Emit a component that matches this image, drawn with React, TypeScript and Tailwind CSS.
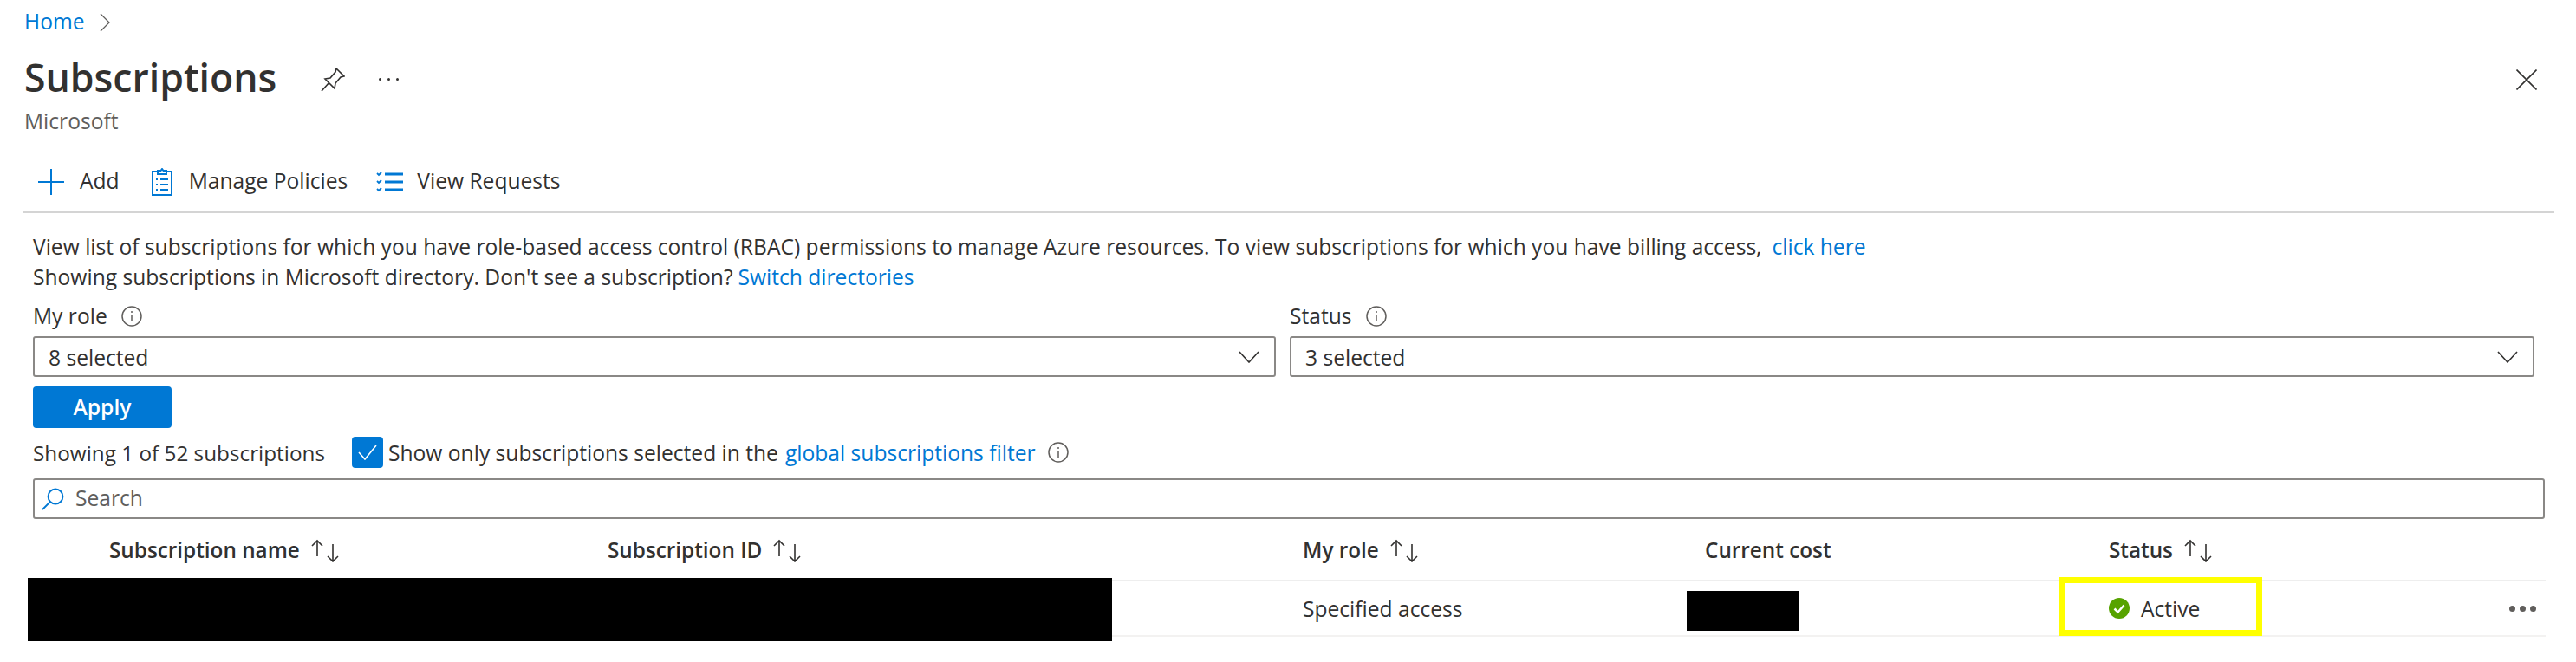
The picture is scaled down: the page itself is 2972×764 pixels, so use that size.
import React from 'react';

const font = "font-['Open_Sans','Noto_Sans',sans-serif]";

function InfoIcon() {
  return (
    <svg width="24" height="24" viewBox="0 0 24 24" fill="none" stroke="#605e5c">
      <circle cx="12" cy="12" r="11" strokeWidth="1.5" />
      <path d="M12 10.500v7.500M12 6v2" strokeWidth="1.5" />
    </svg>
  );
}

function Chevron() {
  return (
    <svg width="24" height="14" viewBox="0 0 24 14" fill="none" stroke="#323130" strokeWidth="1.6">
      <path d="M1 1l11 12L23 1" />
    </svg>
  );
}

function SortIcon() {
  return (
    <svg width="36" height="27" viewBox="0 0 36 27" fill="none" stroke="#323130" strokeWidth="1.6">
      <path d="M9 20V2M3 8l6-6 6 6" />
      <path d="M27 6v20M21 20l6 6 6-6" />
    </svg>
  );
}

function Select({ label, value }: { label: string; value: string }) {
  return (
    <div>
      <div className="flex h-[34px] items-center gap-[16px] pt-[2px]">
        <span>{label}</span>
        <InfoIcon />
      </div>
      <div className="mt-[7px] flex h-[47px] items-center justify-between rounded-[3px] border-2 border-[#8a8886] pl-[16px] pr-[17px]">
        <span className="pt-[3px]">{value}</span>
        <Chevron />
      </div>
    </div>
  );
}

function HeaderCell({ label, sort, className }: { label: string; sort?: boolean; className?: string }) {
  return (
    <div className={`flex items-center gap-[11px] pt-[3px] text-[24.3px] font-semibold ${className || ''}`}>
      <span>{label}</span>
      {sort && <SortIcon />}
    </div>
  );
}

export default function App() {
  return (
    <div className={`${font} relative h-[764px] w-[2972px] overflow-hidden bg-white text-[24.6px] text-[#323130]`}>
      <div className="flex h-[48px] items-center gap-[17px] pl-[28px] pt-[3px] text-[#0078d4]">
        <a>Home</a>
        <svg width="12" height="22" viewBox="0 0 12 22" fill="none" stroke="#605e5c" strokeWidth="1.3">
          <path d="M1 1l10 10L1 21" />
        </svg>
      </div>

      <div className="relative flex h-[72px] items-center pl-[28px] pt-[10px]">
        <h1 className="w-[342px] text-[44.6px] font-semibold leading-none">Subscriptions</h1>
        <svg className="mt-[5px]" width="28" height="28" viewBox="0 0 28 28" fill="none" stroke="#323130" strokeWidth="1.6">
          <path d="M1 27l9-10M18 1l9 9-4 1-6 7-1 6L5 13l6-1 6-7z" />
        </svg>
        <div className="ml-[39px] mt-[5px] flex gap-[7px]">
          <span className="size-[3px] rounded-full bg-[#323130]" />
          <span className="size-[3px] rounded-full bg-[#323130]" />
          <span className="size-[3px] rounded-full bg-[#323130]" />
        </div>
        <svg className="absolute left-[2903px] top-[32px]" width="24" height="24" viewBox="0 0 24 24" fill="none" stroke="#323130" strokeWidth="1.6">
          <path d="M0.500 0.500l23 23M23.500 0.500l-23 23" />
        </svg>
      </div>

      <div className="flex h-[40px] items-center pl-[28px] text-[#605e5c]">Microsoft</div>

      <div className="flex h-[84px] items-center pl-[44px] pt-[15px]">
        <svg width="30" height="30" viewBox="0 0 30 30" fill="none" stroke="#0078d4" strokeWidth="2">
          <path d="M15 0v30M0 15h30" />
        </svg>
        <span className="ml-[18px]">Add</span>
        <svg className="ml-[37px]" width="24" height="32" viewBox="0 0 24 32" fill="none" stroke="#0078d4" strokeWidth="2">
          <path d="M7 4H1v27h22V4h-6" />
          <path d="M7 7V3h3.500l1.500-2 1.500 2H17v4z" />
          <path d="M5 13h2M10 13h9M5 19h2M10 19h9M5 25h2M10 25h9" />
        </svg>
        <span className="ml-[19px]">Manage Policies</span>
        <svg className="ml-[33px]" width="31" height="24" viewBox="0 0 31 24" fill="none" stroke="#0078d4">
          <path d="M10 3h21M10 12h21M10 21h21" strokeWidth="3" />
          <path d="M1 2l2 2 3-3M1 11l2 2 3-3M1 20l2 2 3-3" strokeWidth="1.800" />
        </svg>
        <span className="ml-[16px]">View Requests</span>
      </div>

      <div className="mx-[27px] h-[2px] w-[2920px] bg-[#d4d4d4]" />

      <div className="pl-[38px] pr-[36px] pt-[21px]">
        <div className="flex h-[35px] items-center pt-[2px]">
          <span>View list of subscriptions for which you have role-based access control (RBAC) permissions to manage Azure resources. To view subscriptions for which you have billing access,</span>
          <a className="ml-[12px] text-[#0078d4]">click here</a>
        </div>
        <div className="flex h-[35px] items-center pt-[2px]">
          <span>Showing subscriptions in Microsoft directory. Don't see a subscription?</span>
          <a className="ml-[6px] text-[#0078d4]">Switch directories</a>
        </div>

        <div className="mt-[10px] grid grid-cols-[1434px_1436px] gap-[16px]">
          <Select label="My role" value="8 selected" />
          <Select label="Status" value="3 selected" />
        </div>

        <button className="mt-[11px] block h-[48px] w-[160px] rounded-[4px] bg-[#0078d4] font-semibold text-white">Apply</button>

        <div className="mt-[10px] flex h-[36px] items-center">
          <span className="w-[368px] pt-[2px] text-[24.3px]">Showing 1 of 52 subscriptions</span>
          <span className="flex size-[36px] items-center justify-center rounded-[4px] bg-[#0078d4]">
            <svg width="22" height="18" viewBox="0 0 22 18" fill="none" stroke="white" strokeWidth="1.6">
              <path d="M1 9l7 8L21 1" />
            </svg>
          </span>
          <span className="ml-[6px] pt-[2px]">Show only subscriptions selected in the</span>
          <a className="ml-[8px] pt-[2px] text-[#0078d4]">global subscriptions filter</a>
          <span className="ml-[14px]"><InfoIcon /></span>
        </div>

        <div className="mt-[12px] flex h-[47px] w-[2898px] items-center rounded-[3px] border-2 border-[#8a8886] pl-[8px]">
          <svg width="26" height="26" viewBox="0 0 26 26" fill="none" stroke="#0078d4" strokeWidth="1.8">
            <circle cx="16" cy="10" r="8.500" />
            <path d="M10 16L1 25" />
          </svg>
          <span className="ml-[13px] text-[#605e5c]">Search</span>
        </div>
      </div>

      <div className="relative ml-[32px] w-[2905px]">
        <div className="grid h-[72px] grid-cols-[669px_802px_443px_487px_1fr] border-b-2 border-[#eeeeee]">
          <HeaderCell label="Subscription name" sort className="pl-[94px]" />
          <HeaderCell label="Subscription ID" sort />
          <HeaderCell label="My role" sort />
          <HeaderCell label="Current cost" className="pl-[21px]" />
          <HeaderCell label="Status" sort />
        </div>
        <div className="relative grid h-[64px] grid-cols-[1471px_443px_487px_1fr] border-b-2 border-[#f3f2f1]">
          <div />
          <div className="flex items-center pt-[3px]">Specified access</div>
          <div />
          <div className="flex items-center justify-between pr-[11px]">
            <div className="flex items-center gap-[13px]">
              <svg width="24" height="24" viewBox="0 0 24 24">
                <circle cx="12" cy="12" r="12" fill="#57a300" />
                <path d="M6.500 12.500l4 4 7-8" fill="none" stroke="white" strokeWidth="2.500" />
              </svg>
              <span className="pt-[3px]">Active</span>
            </div>
            <div className="flex gap-[5px]">
              <span className="size-[7px] rounded-full bg-[#605e5c]" />
              <span className="size-[7px] rounded-full bg-[#605e5c]" />
              <span className="size-[7px] rounded-full bg-[#605e5c]" />
            </div>
          </div>
          <div className="absolute left-0 top-[-4px] h-[73px] w-[1251px] bg-black" />
          <div className="absolute left-[1914px] top-[11px] h-[46px] w-[129px] bg-black" />
          <div className="absolute left-[2344px] top-[-5px] h-[68px] w-[234px] border-[7px] border-[#ffff00]" />
        </div>
      </div>
    </div>
  );
}
